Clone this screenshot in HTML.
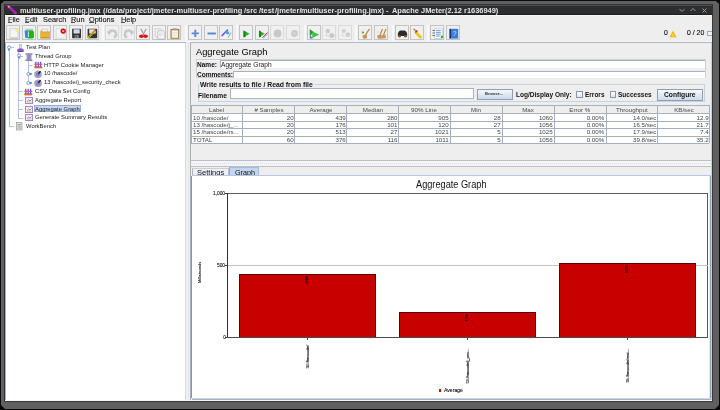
<!DOCTYPE html>
<html><head><meta charset="utf-8"><style>
html,body{margin:0;padding:0;width:720px;height:410px;overflow:hidden;background:#000}
body>div,body>svg{position:absolute;box-sizing:border-box}
.t{will-change:transform;font-family:"Liberation Sans", sans-serif;white-space:nowrap}
</style></head><body>
<div style="left:0;top:0;width:720px;height:410px;background:#0a0a0a"></div>
<div style="left:1px;top:1px;width:718px;height:408px;background:#606060;clip-path:polygon(3px 0,715px 0,718px 3px,718px 404px,714px 408px,4px 408px,0 404px,0 3px)"></div>
<div style="left:4px;top:4px;width:709px;height:398px;background:#2e2e2e"></div>
<div style="left:712px;top:15px;width:1px;height:387px;background:#3a3a3a"></div>
<div style="left:5px;top:5px;width:707px;height:1px;background:#4a5258"></div>
<div style="left:5px;top:4px;width:707px;height:1px;background:#363636"></div>
<div style="left:5px;top:14px;width:707px;height:1px;background:#1e1e1e"></div>
<div style="left:4px;top:401px;width:709px;height:1px;background:#3a3a3a"></div>
<div class="t" style="left:20px;top:6px;font-size:7.45px;line-height:9px;font-weight:bold;color:#e4e4e4">multiuser-profiling.jmx</div>
<div class="t" style="left:103.4px;top:6px;font-size:7.45px;line-height:9px;font-weight:bold;color:#e4e4e4">(/data/project/jmeter-multiuser-profiling</div>
<div class="t" style="left:244.2px;top:6px;font-size:7.45px;line-height:9px;font-weight:bold;color:#e4e4e4">/src</div>
<div class="t" style="left:258.8px;top:6px;font-size:7.45px;line-height:9px;font-weight:bold;color:#e4e4e4">/test</div>
<div class="t" style="left:274.8px;top:6px;font-size:7.45px;line-height:9px;font-weight:bold;color:#e4e4e4">/jmeter/</div>
<div class="t" style="left:301.2px;top:6px;font-size:7.45px;line-height:9px;font-weight:bold;color:#e4e4e4">multiuser-profiling.jmx) -</div>
<div class="t" style="left:391.5px;top:6px;font-size:7.45px;line-height:9px;font-weight:bold;color:#e4e4e4">Apache</div>
<div class="t" style="left:420.6px;top:6px;font-size:7.45px;line-height:9px;font-weight:bold;color:#e4e4e4">JMeter</div>
<div class="t" style="left:444.9px;top:6px;font-size:7.45px;line-height:9px;font-weight:bold;color:#e4e4e4">(2.12</div>
<div class="t" style="left:464.4px;top:6px;font-size:7.45px;line-height:9px;font-weight:bold;color:#e4e4e4">r1636949)</div>
<svg style="left:7px;top:5px" width="11" height="10" viewBox="0 0 11 10"><path d="M1.5 1.5 L8.5 8" stroke="#c020c0" stroke-width="2.6" stroke-linecap="round"/><path d="M3 3 L8 7.5" stroke="#6a20d0" stroke-width="1" /><circle cx="1.8" cy="1.8" r="1" fill="#d0b060"/></svg>
<svg style="left:677px;top:6px" width="34" height="8" viewBox="0 0 34 8"><path d="M2.5 3 L5 5.5 L7.5 3" stroke="#9a9a9a" fill="none" stroke-width="1"/><path d="M13.5 5 L16 2.5 L18.5 5" stroke="#9a9a9a" fill="none" stroke-width="1"/><path d="M25.5 2.5 L29.5 6.5 M29.5 2.5 L25.5 6.5" stroke="#9a9a9a" fill="none" stroke-width="1"/></svg>
<div style="left:5px;top:15px;width:707px;height:385.8px;background:#eeeeee"></div>
<div style="left:5px;top:399.6px;width:707px;height:1.2px;background:#f6f6f6"></div>
<div style="left:5px;top:15px;width:707px;height:1px;background:#f8f8f8"></div>
<div class="t" style="left:8.2px;top:16.4px;font-size:7.35px;line-height:7.35px;font-weight:normal;color:#111;-webkit-text-stroke:0.1px #000">File</div>
<div class="t" style="left:24.9px;top:16.4px;font-size:7.35px;line-height:7.35px;font-weight:normal;color:#111;-webkit-text-stroke:0.1px #000">Edit</div>
<div class="t" style="left:42.8px;top:16.4px;font-size:7.35px;line-height:7.35px;font-weight:normal;color:#111;-webkit-text-stroke:0.1px #000">Search</div>
<div class="t" style="left:71px;top:16.4px;font-size:7.35px;line-height:7.35px;font-weight:normal;color:#111;-webkit-text-stroke:0.1px #000">Run</div>
<div class="t" style="left:89.1px;top:16.4px;font-size:7.35px;line-height:7.35px;font-weight:normal;color:#111;-webkit-text-stroke:0.1px #000">Options</div>
<div class="t" style="left:120.6px;top:16.4px;font-size:7.35px;line-height:7.35px;font-weight:normal;color:#111;-webkit-text-stroke:0.1px #000">Help</div>
<div style="left:8.3px;top:22.3px;width:3.6px;height:0.6px;background:#555"></div>
<div style="left:25px;top:22.3px;width:3.8px;height:0.6px;background:#555"></div>
<div style="left:71.2px;top:22.3px;width:4.2px;height:0.6px;background:#555"></div>
<div style="left:89.3px;top:22.3px;width:4.6px;height:0.6px;background:#555"></div>
<div style="left:120.8px;top:22.3px;width:4.4px;height:0.6px;background:#555"></div>
<div style="left:5px;top:24px;width:707px;height:18px;background:#eeeeee"></div>
<div style="left:5px;top:41px;width:707px;height:1px;background:#f6f6f6"></div>
<div style="left:5.7px;top:25.3px;width:14px;height:14.6px;border:0.8px solid #c4c4c4;background:#f0f0f0"></div>
<svg style="left:5.7px;top:25.5px" width="15" height="15" viewBox="0 0 15 15"><rect x="3.9" y="2.8" width="8.1" height="9.3" fill="#f6f6f4" stroke="#c4c4c4" stroke-width="0.7"/><path d="M4 12.1 h8" stroke="#a8a8a8" stroke-width="0.7"/><circle cx="11.2" cy="4.3" r="1.7" fill="#f4e890"/></svg>
<div style="left:21.5px;top:25.3px;width:14px;height:14.6px;border:0.8px solid #c4c4c4;background:#f0f0f0"></div>
<svg style="left:21.5px;top:25.5px" width="15" height="15" viewBox="0 0 15 15"><path d="M3.5 2.8 h7.5 v2 h-7.5 z" fill="#b8c0c8"/><path d="M2.6 4.5 h3.3 v7.4 h-2.6 z" fill="#2a8ae0"/><path d="M5.7 4.5 h5.2 l1 1.5 v5.8 l-1.5 0.6 h-4.7 z" fill="#20b020"/><rect x="6" y="5.5" width="0.9" height="5.5" fill="#c8f0c8"/></svg>
<div style="left:37.3px;top:25.3px;width:14px;height:14.6px;border:0.8px solid #c4c4c4;background:#f0f0f0"></div>
<svg style="left:37.3px;top:25.5px" width="15" height="15" viewBox="0 0 15 15"><rect x="5" y="3" width="5.5" height="3.5" fill="#f0f0f0" stroke="#b8b8b8" stroke-width="0.5"/><path d="M3.5 4.5 h1.5 v1 h8 v6.5 h-9.5 z" fill="#d8a428"/><path d="M3.3 6.4 h9.6 v5.6 q0 0.5 -0.5 0.5 h-8.6 q-0.5 0 -0.5 -0.5 z" fill="#e4b43c"/><path d="M3.5 11.8 h9.2" stroke="#b88818" stroke-width="0.8"/></svg>
<div style="left:53.1px;top:25.3px;width:14px;height:14.6px;border:0.8px solid #c4c4c4;background:#f0f0f0"></div>
<svg style="left:53.1px;top:25.5px" width="15" height="15" viewBox="0 0 15 15"><path d="M3.2 2.6 h6 l2.6 2.6 v5 l-2 2 h-6.6 z" fill="#f6f6f6" stroke="#d0d0d0" stroke-width="0.6"/><circle cx="10.2" cy="5.1" r="2.7" fill="#cc1010"/><path d="M9.2 4.1 l2 2 M11.2 4.1 l-2 2" stroke="#f8e0c0" stroke-width="0.8"/></svg>
<div style="left:68.9px;top:25.3px;width:14px;height:14.6px;border:0.8px solid #c4c4c4;background:#f0f0f0"></div>
<svg style="left:68.9px;top:25.5px" width="15" height="15" viewBox="0 0 15 15"><rect x="3.1" y="2.8" width="8.9" height="9.4" rx="0.6" fill="#333"/><rect x="4.6" y="3.3" width="6" height="4.2" fill="#dde6f0"/><path d="M4.6 4.6 h6 M4.6 5.9 h6" stroke="#b0c4dc" stroke-width="0.5"/><rect x="5.6" y="9" width="4" height="3" fill="#8a8a8a"/><rect x="6.6" y="9.5" width="1" height="2" fill="#333"/></svg>
<div style="left:84.7px;top:25.3px;width:14px;height:14.6px;border:0.8px solid #c4c4c4;background:#f0f0f0"></div>
<svg style="left:84.7px;top:25.5px" width="15" height="15" viewBox="0 0 15 15"><rect x="2.6" y="2.8" width="9.6" height="9.4" rx="0.6" fill="#333"/><rect x="4.2" y="3.3" width="6.5" height="4.2" fill="#dde6f0"/><path d="M3 12 L10.3 4.2" stroke="#d8b018" stroke-width="2.2"/><path d="M4 11 l1 -1 M6 8.8 l1 -1 M8 6.6 l1 -1" stroke="#222" stroke-width="0.7"/><circle cx="10.5" cy="4" r="1" fill="#e02020"/></svg>
<div style="left:105.3px;top:25.3px;width:14px;height:14.6px;border:0.8px solid #dadada;background:#f0f0f0"></div>
<svg style="left:105.3px;top:25.5px" width="15" height="15" viewBox="0 0 15 15"><path d="M3.8 7.5 C4 4, 10 3, 11 7.5 C11.5 9.5, 10 11, 9 11.5" stroke="#c8c8c8" stroke-width="2.6" fill="none"/><path d="M1.6 5.2 L6.6 5.2 L4.2 9.6 z" fill="#c8c8c8"/></svg>
<div style="left:120.7px;top:25.3px;width:14px;height:14.6px;border:0.8px solid #dadada;background:#f0f0f0"></div>
<svg style="left:120.7px;top:25.5px" width="15" height="15" viewBox="0 0 15 15"><path d="M11.2 7.5 C11 4, 5 3, 4 7.5 C3.5 9.5, 5 11, 6 11.5" stroke="#c8c8c8" stroke-width="2.6" fill="none"/><path d="M13.4 5.2 L8.4 5.2 L10.8 9.6 z" fill="#c8c8c8"/></svg>
<div style="left:136.1px;top:25.3px;width:14px;height:14.6px;border:0.8px solid #c4c4c4;background:#f0f0f0"></div>
<svg style="left:136.1px;top:25.5px" width="15" height="15" viewBox="0 0 15 15"><path d="M4.8 2.8 L8.2 9 M10.2 2.8 L6.8 9" stroke="#909090" stroke-width="1.1"/><path d="M5.8 3 L8 7.5 M9.2 3 L7 7.5" stroke="#e0e0e0" stroke-width="0.4"/><ellipse cx="5.4" cy="10.3" rx="2.3" ry="1.8" fill="#d81414"/><ellipse cx="9.6" cy="10.3" rx="2.3" ry="1.8" fill="#d81414"/></svg>
<div style="left:151.6px;top:25.3px;width:14px;height:14.6px;border:0.8px solid #c4c4c4;background:#f0f0f0"></div>
<svg style="left:151.6px;top:25.5px" width="15" height="15" viewBox="0 0 15 15"><path d="M3.2 2.8 h5.5 l1 1 v7 h-6.5 z" fill="#f2f2f2" stroke="#bcbcbc" stroke-width="0.6"/><path d="M5.8 4.8 h5.7 l1.2 1.2 v6 l-1.2 1 h-5.7 z" fill="#f6f6f6" stroke="#a8a8a8" stroke-width="0.6"/><path d="M7 7 h4 M7 8.5 h4 M7 10 h3" stroke="#c8c8c8" stroke-width="0.5"/></svg>
<div style="left:167.1px;top:25.3px;width:14px;height:14.6px;border:0.8px solid #c4c4c4;background:#f0f0f0"></div>
<svg style="left:167.1px;top:25.5px" width="15" height="15" viewBox="0 0 15 15"><rect x="3.5" y="3" width="8.8" height="9.8" rx="0.5" fill="#a8721e"/><rect x="4.6" y="4.2" width="6.6" height="7.6" fill="#f4f4f4"/><rect x="6" y="2.2" width="3.8" height="2" rx="0.5" fill="#9a9a9a"/><path d="M5.5 6.5 h5 M5.5 8 h5 M5.5 9.5 h4" stroke="#d4d4d4" stroke-width="0.5"/></svg>
<div style="left:188.0px;top:25.3px;width:14px;height:14.6px;border:0.8px solid #c4c4c4;background:#f0f0f0"></div>
<svg style="left:188.0px;top:25.5px" width="15" height="15" viewBox="0 0 15 15"><path d="M7.3 3.8 v7.2 M3.7 7.4 h7.2" stroke="#5a8ad0" stroke-width="1.9"/></svg>
<div style="left:203.6px;top:25.3px;width:14px;height:14.6px;border:0.8px solid #c4c4c4;background:#f0f0f0"></div>
<svg style="left:203.6px;top:25.5px" width="15" height="15" viewBox="0 0 15 15"><path d="M4.2 7.5 h7" stroke="#5a8ad0" stroke-width="1.8" stroke-linecap="round"/></svg>
<div style="left:219.0px;top:25.3px;width:14px;height:14.6px;border:0.8px solid #c4c4c4;background:#f0f0f0"></div>
<svg style="left:219.0px;top:25.5px" width="15" height="15" viewBox="0 0 15 15"><path d="M3 9.6 L8.5 4" stroke="#8a4ae0" stroke-width="1.5" stroke-linecap="round"/><path d="M6.5 7 Q8 5 9.5 8" stroke="#28a8f0" stroke-width="2.4" fill="none"/><path d="M9 11.5 L12.2 6.5" stroke="#b0b0b0" stroke-width="1.2"/></svg>
<div style="left:239.3px;top:25.3px;width:14px;height:14.6px;border:0.8px solid #c4c4c4;background:#f0f0f0"></div>
<svg style="left:239.3px;top:25.5px" width="15" height="15" viewBox="0 0 15 15"><path d="M4.5 4.4 L10.8 7.8 L4.5 11.2 z" fill="#30b030"/><path d="M4.5 4.4 L6.5 5.5 L6.5 11 L4.5 11.2 z" fill="#148814"/></svg>
<div style="left:254.8px;top:25.3px;width:14px;height:14.6px;border:0.8px solid #c4c4c4;background:#f0f0f0"></div>
<svg style="left:254.8px;top:25.5px" width="15" height="15" viewBox="0 0 15 15"><path d="M4 4.4 L9.8 7.8 L4 11.2 z" fill="#30b030"/><path d="M4 4.4 L6 5.5 L6 11 L4 11.2 z" fill="#148814"/><path d="M7.5 11.8 L12.4 6.5" stroke="#e02828" stroke-width="1"/><path d="M8.5 12 L12.6 8" stroke="#4aa0e0" stroke-width="0.8"/></svg>
<div style="left:270.4px;top:25.3px;width:14px;height:14.6px;border:0.8px solid #dadada;background:#f0f0f0"></div>
<svg style="left:270.4px;top:25.5px" width="15" height="15" viewBox="0 0 15 15"><circle cx="7.6" cy="7.5" r="3.9" fill="#c8c8c8"/></svg>
<div style="left:286.0px;top:25.3px;width:14px;height:14.6px;border:0.8px solid #dadada;background:#f0f0f0"></div>
<svg style="left:286.0px;top:25.5px" width="15" height="15" viewBox="0 0 15 15"><circle cx="8.4" cy="7.5" r="3.4" fill="#cacaca"/><path d="M7.3 6.4 l2.2 2.2 M9.5 6.4 l-2.2 2.2" stroke="#e6e6e6" stroke-width="0.7"/></svg>
<div style="left:306.7px;top:25.3px;width:14px;height:14.6px;border:0.8px solid #c4c4c4;background:#f0f0f0"></div>
<svg style="left:306.7px;top:25.5px" width="15" height="15" viewBox="0 0 15 15"><path d="M2.7 3.1 L7.5 6.4 L2.7 9.7 z" fill="#2aa02a"/><path d="M5.3 5.8 L12.3 8.5 L5.3 12 z" fill="#40c040"/><path d="M3.5 9.6 v2.2 h2" stroke="#2a78c8" stroke-width="1.3" fill="none"/></svg>
<div style="left:322.2px;top:25.3px;width:14px;height:14.6px;border:0.8px solid #dadada;background:#f0f0f0"></div>
<svg style="left:322.2px;top:25.5px" width="15" height="15" viewBox="0 0 15 15"><circle cx="5.8" cy="5" r="2.3" fill="#cccccc"/><circle cx="9.8" cy="9.5" r="2.5" fill="#c8c8c8"/><path d="M4.5 7.5 v2.5 h2.5" stroke="#c8c8c8" stroke-width="0.7" fill="none"/></svg>
<div style="left:337.7px;top:25.3px;width:14px;height:14.6px;border:0.8px solid #dadada;background:#f0f0f0"></div>
<svg style="left:337.7px;top:25.5px" width="15" height="15" viewBox="0 0 15 15"><circle cx="5.8" cy="5" r="2.1" fill="#d0d0d0"/><circle cx="9.8" cy="8.8" r="2.3" fill="#cccccc"/><path d="M4.5 7.5 v2.5 h2.5" stroke="#d0d0d0" stroke-width="0.7" fill="none"/></svg>
<div style="left:358.3px;top:25.3px;width:14px;height:14.6px;border:0.8px solid #c4c4c4;background:#f0f0f0"></div>
<svg style="left:358.3px;top:25.5px" width="15" height="15" viewBox="0 0 15 15"><circle cx="4.5" cy="6" r="2" fill="#e4e4e4"/><circle cx="5" cy="6.5" r="1" fill="#40b030"/><path d="M7.5 9 L11.3 3" stroke="#b88848" stroke-width="1.4"/><path d="M4.2 9.5 L8.8 8.2 L9.2 12.3 L5.4 12.8 z" fill="#c89458"/></svg>
<div style="left:373.6px;top:25.3px;width:14px;height:14.6px;border:0.8px solid #c4c4c4;background:#f0f0f0"></div>
<svg style="left:373.6px;top:25.5px" width="15" height="15" viewBox="0 0 15 15"><circle cx="4" cy="6" r="1.6" fill="#e6e6e6"/><path d="M6 9 L8.5 3 M9.5 9 L12 3" stroke="#b88848" stroke-width="1.2"/><path d="M3 9.5 L7.5 8.5 L8 12.5 L4 12.8 z" fill="#c89458"/><path d="M7 9.5 L11.5 8.5 L12 12.3 L8 12.6 z" fill="#c89458"/></svg>
<div style="left:394.9px;top:25.3px;width:14px;height:14.6px;border:0.8px solid #c4c4c4;background:#f0f0f0"></div>
<svg style="left:394.9px;top:25.5px" width="15" height="15" viewBox="0 0 15 15"><path d="M2.7 9 Q3 5 5.5 4.5 L9.5 4.5 Q12 5 12.3 9 Q12 11.5 10 11.5 L9 10 L6 10 L5 11.5 Q3 11.5 2.7 9 z" fill="#2a2a2a"/><ellipse cx="4.5" cy="10" rx="1.4" ry="1" fill="#a05020"/><ellipse cx="10.5" cy="10" rx="1.4" ry="1" fill="#a05020"/></svg>
<div style="left:409.8px;top:25.3px;width:14px;height:14.6px;border:0.8px solid #c4c4c4;background:#f0f0f0"></div>
<svg style="left:409.8px;top:25.5px" width="15" height="15" viewBox="0 0 15 15"><path d="M3.5 2.8 L7.5 6.8" stroke="#c88838" stroke-width="1.5"/><path d="M6.5 5.5 L12.5 10.8 L10 12.8 L4.8 7.2 z" fill="#f0c81c"/><path d="M5.3 6.5 L7.4 4.6" stroke="#d82020" stroke-width="1.3"/><path d="M7 9 L10.5 12" stroke="#d8a810" stroke-width="0.5"/></svg>
<div style="left:430.0px;top:25.3px;width:14px;height:14.6px;border:0.8px solid #c4c4c4;background:#f0f0f0"></div>
<svg style="left:430.0px;top:25.5px" width="15" height="15" viewBox="0 0 15 15"><rect x="4.3" y="2.8" width="8" height="9.8" fill="#f8fafc" stroke="#b8c4d0" stroke-width="0.6"/><path d="M5.8 4.6 h5 M5.8 6.4 h5 M5.8 8.2 h5 M5.8 10 h4" stroke="#4a8ad8" stroke-width="0.8"/><path d="M2.5 4.5 h2.2 M2.5 7 h2.2 M2.5 9.5 h2.2" stroke="#404040" stroke-width="0.8"/><rect x="10.8" y="9.6" width="2.2" height="2.4" fill="#30b030"/></svg>
<div style="left:445.6px;top:25.3px;width:14px;height:14.6px;border:0.8px solid #c4c4c4;background:#f0f0f0"></div>
<svg style="left:445.6px;top:25.5px" width="15" height="15" viewBox="0 0 15 15"><rect x="4.6" y="2.8" width="7.6" height="9.8" fill="#3a7ad8"/><rect x="3.4" y="2.8" width="1.6" height="9.8" fill="#1a3060"/><text x="8.4" y="10.2" font-size="7" font-family="Liberation Sans" fill="#d8e8ff" text-anchor="middle">?</text></svg>
<div style="left:101.5px;top:25px;width:2px;height:16px;background:#f8f8f8"></div>
<div style="left:184.5px;top:25px;width:2px;height:16px;background:#f8f8f8"></div>
<div style="left:236px;top:25px;width:2px;height:16px;background:#f8f8f8"></div>
<div style="left:303.5px;top:25px;width:2px;height:16px;background:#f8f8f8"></div>
<div style="left:355px;top:25px;width:2px;height:16px;background:#f8f8f8"></div>
<div style="left:391.5px;top:25px;width:2px;height:16px;background:#f8f8f8"></div>
<div style="left:427px;top:25px;width:2px;height:16px;background:#f8f8f8"></div>
<div class="t" style="left:663.5px;top:30.3px;font-size:6.9px;line-height:6.9px;font-weight:normal;color:#111;-webkit-text-stroke:0.12px #000">0</div>
<svg style="left:668.5px;top:29.5px" width="8" height="8" viewBox="0 0 8 8"><path d="M4 0.5 L7.5 7.3 L0.5 7.3 z" fill="#f2b418"/><path d="M4 3 L5.6 6.2 L2.4 6.2 z" fill="#f8d838"/></svg>
<div class="t" style="left:686.5px;top:30.3px;font-size:6.9px;line-height:6.9px;font-weight:normal;color:#111;-webkit-text-stroke:0.12px #000">0 / 20</div>
<div style="left:707.3px;top:31px;width:5px;height:5px;background:#eef2f8;border:0.6px solid #9aa8b8;border-right:none"></div>
<div style="left:5px;top:43px;width:180.3px;height:356.6px;background:#ffffff"></div>
<div style="left:185.2px;top:43px;width:1px;height:356.6px;background:#d4dae2"></div>
<div style="left:186.2px;top:43px;width:4.2px;height:356.6px;background:#f0f0f0"></div>
<div style="left:188px;top:43px;width:1px;height:356px;background:repeating-linear-gradient(#dadada 0 1px,transparent 1px 2px)"></div>
<div style="left:9.2px;top:50.5px;width:0.8px;height:76.5px;background:#abc3e4"></div>
<div style="left:9.2px;top:126.2px;width:4.5px;height:0.8px;background:#abc3e4"></div>
<div style="left:11px;top:46.8px;width:3px;height:0.8px;background:#abc3e4"></div>
<div style="left:18.4px;top:52px;width:0.8px;height:2.2px;background:#abc3e4"></div>
<div style="left:18.4px;top:59.3px;width:0.8px;height:58.7px;background:#abc3e4"></div>
<div style="left:18.4px;top:91.2px;width:4.5px;height:0.8px;background:#abc3e4"></div>
<div style="left:18.4px;top:100.0px;width:4.5px;height:0.8px;background:#abc3e4"></div>
<div style="left:18.4px;top:108.8px;width:4.5px;height:0.8px;background:#abc3e4"></div>
<div style="left:18.4px;top:117.6px;width:4.5px;height:0.8px;background:#abc3e4"></div>
<div style="left:20.2px;top:55.6px;width:3px;height:0.8px;background:#abc3e4"></div>
<div style="left:27.6px;top:61px;width:0.8px;height:22px;background:#abc3e4"></div>
<div style="left:27.6px;top:64.6px;width:4.5px;height:0.8px;background:#abc3e4"></div>
<div style="left:27.6px;top:73.4px;width:4.5px;height:0.8px;background:#abc3e4"></div>
<div style="left:27.6px;top:82.2px;width:4.5px;height:0.8px;background:#abc3e4"></div>
<svg style="left:6.4px;top:44.5px" width="6" height="7" viewBox="0 0 6 7"><circle cx="3" cy="2.4" r="1.5" fill="#fff" stroke="#5a88d0" stroke-width="0.8"/><path d="M1.6 3.9 L4.4 3.9 L3 6.6 z" fill="#5a88d0"/></svg>
<svg style="left:15.600000000000001px;top:53.3px" width="6" height="7" viewBox="0 0 6 7"><circle cx="3" cy="2.4" r="1.5" fill="#fff" stroke="#5a88d0" stroke-width="0.8"/><path d="M1.6 3.9 L4.4 3.9 L3 6.6 z" fill="#5a88d0"/></svg>
<svg style="left:25.5px;top:70.8px" width="7" height="6" viewBox="0 0 7 6"><circle cx="2.3" cy="3" r="1.5" fill="#fff" stroke="#5a88d0" stroke-width="0.8"/><path d="M3.9 1.6 L3.9 4.4 L6.6 3 z" fill="#5a88d0"/></svg>
<svg style="left:25.5px;top:79.6px" width="7" height="6" viewBox="0 0 7 6"><circle cx="2.3" cy="3" r="1.5" fill="#fff" stroke="#5a88d0" stroke-width="0.8"/><path d="M3.9 1.6 L3.9 4.4 L6.6 3 z" fill="#5a88d0"/></svg>
<svg style="left:16.5px;top:43.8px" width="7" height="8.5" viewBox="0 0 7 8.5"><rect x="2.3" y="0" width="2.4" height="4.6" fill="#d8d8e0" stroke="#999" stroke-width="0.4"/><ellipse cx="3.5" cy="6.2" rx="3.3" ry="1.9" fill="#8a5ad0"/><rect x="0.5" y="7.3" width="6" height="0.9" fill="#5a3a90"/></svg>
<svg style="left:25px;top:52.5px" width="8" height="8.5" viewBox="0 0 8 8.5"><rect x="0.5" y="0.3" width="7" height="1.6" fill="#8a80a8"/><rect x="1.5" y="1.5" width="5" height="5.5" fill="#a89cc8"/><rect x="0.5" y="6.6" width="7" height="1.6" fill="#8a80a8"/><path d="M2.5 3 h3 M2.5 5 h3" stroke="#6a6088" stroke-width="0.5"/></svg>
<svg style="left:34px;top:61px" width="8.5" height="8.5" viewBox="0 0 8.5 8.5"><rect x="0.3" y="5" width="8" height="2.6" rx="1" fill="#e89030"/><path d="M1.8 0.8 v6 M4.2 0.8 v6 M6.6 0.8 v6" stroke="#5a58d8" stroke-width="1.3"/><path d="M0.3 3.3 h8" stroke="#e04a9a" stroke-width="1.3"/><path d="M0 6.2 h8.5" stroke="#d87a20" stroke-width="0.7"/></svg>
<svg style="left:34px;top:69.8px" width="8.2" height="8.6" viewBox="0 0 8.2 8.6"><circle cx="4" cy="4.4" r="3.6" fill="#aaa2d4" stroke="#6a6298" stroke-width="0.5" stroke-dasharray="0.8 0.6"/><circle cx="4" cy="4.4" r="2" fill="#8a80b8"/><path d="M4.3 3.8 L6.6 1.3" stroke="#181828" stroke-width="1.4"/></svg>
<svg style="left:34px;top:78.6px" width="8.2" height="8.6" viewBox="0 0 8.2 8.6"><circle cx="4" cy="4.4" r="3.6" fill="#aaa2d4" stroke="#6a6298" stroke-width="0.5" stroke-dasharray="0.8 0.6"/><circle cx="4" cy="4.4" r="2" fill="#8a80b8"/><path d="M4.3 3.8 L6.6 1.3" stroke="#181828" stroke-width="1.4"/></svg>
<svg style="left:24.2px;top:87.5px" width="8.5" height="8.5" viewBox="0 0 8.5 8.5"><rect x="0.3" y="5" width="8" height="2.6" rx="1" fill="#e89030"/><path d="M1.8 0.8 v6 M4.2 0.8 v6 M6.6 0.8 v6" stroke="#5a58d8" stroke-width="1.3"/><path d="M0.3 3.3 h8" stroke="#e04a9a" stroke-width="1.3"/><path d="M0 6.2 h8.5" stroke="#d87a20" stroke-width="0.7"/></svg>
<svg style="left:24.8px;top:96.8px" width="8.2" height="7.5" viewBox="0 0 8.2 7.5"><rect x="0.6" y="0.6" width="7" height="6" fill="#fafafa" stroke="#9a7ccc" stroke-width="1.0"/><path d="M2 4.5 L3.5 3 L5 4 L6.5 2.5" stroke="#e03030" stroke-width="0.7" fill="none"/><path d="M2 5 L6.5 5" stroke="#30a030" stroke-width="0.5"/></svg>
<svg style="left:24.8px;top:105.6px" width="8.2" height="7.5" viewBox="0 0 8.2 7.5"><rect x="0.6" y="0.6" width="7" height="6" fill="#fafafa" stroke="#9a7ccc" stroke-width="1.0"/><path d="M2 4.5 L3.5 3 L5 4 L6.5 2.5" stroke="#e03030" stroke-width="0.7" fill="none"/><path d="M2 5 L6.5 5" stroke="#30a030" stroke-width="0.5"/></svg>
<svg style="left:24.8px;top:114.4px" width="8.2" height="7.5" viewBox="0 0 8.2 7.5"><rect x="0.6" y="0.6" width="7" height="6" fill="#fafafa" stroke="#9a7ccc" stroke-width="1.0"/><path d="M2 4.5 L3.5 3 L5 4 L6.5 2.5" stroke="#e03030" stroke-width="0.7" fill="none"/><path d="M2 5 L6.5 5" stroke="#30a030" stroke-width="0.5"/></svg>
<svg style="left:16px;top:122.3px" width="6.5" height="8.5" viewBox="0 0 6.5 8.5"><rect x="0.5" y="0.5" width="5.5" height="7.5" fill="#e4e4e4" stroke="#8a8a8a" stroke-width="0.6"/><path d="M1.5 2.5 h3.5 M1.5 4.2 h3.5 M1.5 6 h3.5" stroke="#7a7a7a" stroke-width="0.6"/></svg>
<div style="left:34.2px;top:104.7px;width:46.5px;height:7.8px;background:#c6d8f0;border:0.6px solid #94acd6;box-sizing:border-box"></div>
<div class="t" style="left:26.2px;top:45.0px;font-size:5.85px;line-height:5.85px;font-weight:normal;color:#222;">Test Plan</div>
<div class="t" style="left:35.2px;top:53.800000000000004px;font-size:5.85px;line-height:5.85px;font-weight:normal;color:#222;">Thread Group</div>
<div class="t" style="left:44px;top:62.60000000000001px;font-size:5.85px;line-height:5.85px;font-weight:normal;color:#222;">HTTP Cookie Manager</div>
<div class="t" style="left:44px;top:71.4px;font-size:5.85px;line-height:5.85px;font-weight:normal;color:#222;">10 /hascode/</div>
<div class="t" style="left:44px;top:80.2px;font-size:5.85px;line-height:5.85px;font-weight:normal;color:#222;">13 /hascode/j_security_check</div>
<div class="t" style="left:35.2px;top:89.0px;font-size:5.85px;line-height:5.85px;font-weight:normal;color:#222;">CSV Data Set Config</div>
<div class="t" style="left:35.2px;top:97.8px;font-size:5.85px;line-height:5.85px;font-weight:normal;color:#222;">Aggregate Report</div>
<div class="t" style="left:35.2px;top:106.60000000000001px;font-size:5.85px;line-height:5.85px;font-weight:normal;color:#222;">Aggregate Graph</div>
<div class="t" style="left:35.2px;top:115.4px;font-size:5.85px;line-height:5.85px;font-weight:normal;color:#222;">Generate Summary Results</div>
<div class="t" style="left:26.2px;top:124.2px;font-size:5.85px;line-height:5.85px;font-weight:normal;color:#222;">WorkBench</div>
<div style="left:190.4px;top:43px;width:521.6px;height:356.6px;background:#eeeeee"></div>
<div style="left:190.2px;top:43px;width:1px;height:356.6px;background:#a8b0ba"></div>
<div style="left:5px;top:42.1px;width:181px;height:0.9px;background:#aeb8c4"></div>
<div style="left:5px;top:43px;width:1px;height:356.6px;background:#a4b0be"></div>
<div style="left:190.2px;top:42.1px;width:521.8px;height:0.9px;background:#aeb8c4"></div>
<div class="t" style="left:196.3px;top:48.0px;font-size:9.3px;line-height:9.3px;font-weight:normal;color:#000;">Aggregate Graph</div>
<div style="left:195.6px;top:59.3px;width:510px;height:19px;border:0.7px solid #cfcfcf;box-sizing:border-box;box-shadow:inset 0.6px 0.6px 0 #fff"></div>
<div class="t" style="left:197px;top:62.1px;font-size:6.55px;line-height:6.55px;font-weight:bold;color:#111;">Name:</div>
<div style="left:219.9px;top:60.3px;width:485.3px;height:7.5px;background:#fff;border-top:0.7px solid #a8b0c0;border-left:0.7px solid #a8b0c0;box-sizing:border-box"></div>
<div class="t" style="left:220.9px;top:62.0px;font-size:6.6px;line-height:6.6px;font-weight:normal;color:#1a1a1a;">Aggregate Graph</div>
<div class="t" style="left:197px;top:72.2px;font-size:6.55px;line-height:6.55px;font-weight:bold;color:#111;">Comments:</div>
<div style="left:233.1px;top:70.8px;width:472.1px;height:7.1px;background:#fff;border-top:0.7px solid #a8b0c0;border-left:0.7px solid #a8b0c0;box-sizing:border-box"></div>
<div style="left:197.5px;top:84.3px;width:507px;height:17.4px;border:0.7px solid #c4d2e4;box-sizing:border-box"></div>
<div style="left:199.4px;top:81.5px;width:116px;height:5px;background:#eeeeee"></div>
<div class="t" style="left:200.2px;top:82.4px;font-size:6.85px;line-height:6.85px;font-weight:bold;color:#111;">Write results to file / Read from file</div>
<div class="t" style="left:198.3px;top:92.5px;font-size:6.7px;line-height:6.7px;font-weight:bold;color:#111;">Filename</div>
<div style="left:230px;top:88.3px;width:243.8px;height:11.1px;background:#fff;border:0.7px solid #a8b4c4;box-sizing:border-box"></div>
<div style="left:477.3px;top:88.9px;width:35.9px;height:10.7px;background:linear-gradient(#f4f7fb,#cbd9e8);border:0.7px solid #8ea0b8;box-sizing:border-box"></div>
<div class="t" style="left:484.5px;top:92.4px;font-size:4.1px;line-height:4.1px;font-weight:bold;color:#333;">Browse...</div>
<div class="t" style="left:515.8px;top:92.3px;font-size:6.56px;line-height:6.56px;font-weight:bold;color:#111;">Log/Display Only:</div>
<div style="left:576.3px;top:91.4px;width:6.6px;height:6.6px;background:linear-gradient(#ffffff,#dde6f0);border:0.7px solid #8898b0;box-sizing:border-box"></div>
<div class="t" style="left:584.6px;top:92.3px;font-size:6.5px;line-height:6.5px;font-weight:bold;color:#111;">Errors</div>
<div style="left:610px;top:91.4px;width:6.4px;height:6.6px;background:linear-gradient(#ffffff,#dde6f0);border:0.7px solid #8898b0;box-sizing:border-box"></div>
<div class="t" style="left:618.3px;top:92.3px;font-size:6.5px;line-height:6.5px;font-weight:bold;color:#111;">Successes</div>
<div style="left:656.5px;top:88.9px;width:46.8px;height:11.9px;background:linear-gradient(#f6f9fc,#cddbea);border:0.7px solid #8ea0b8;box-sizing:border-box"></div>
<div class="t" style="left:664.2px;top:91.9px;font-size:6.7px;line-height:6.7px;font-weight:bold;color:#111;">Configure</div>
<div style="left:191.3px;top:105.2px;width:518.2px;height:8.1px;background:#eeeeee"></div>
<div style="left:191.3px;top:113.3px;width:518.2px;height:30px;background:#fff"></div>
<div style="left:190.9px;top:105.2px;width:0.8px;height:38.1px;background:#a2b0c2"></div>
<div style="left:242.1px;top:105.2px;width:0.8px;height:38.1px;background:#a2b0c2"></div>
<div style="left:294.1px;top:105.2px;width:0.8px;height:38.1px;background:#a2b0c2"></div>
<div style="left:346.20000000000005px;top:105.2px;width:0.8px;height:38.1px;background:#a2b0c2"></div>
<div style="left:398.0px;top:105.2px;width:0.8px;height:38.1px;background:#a2b0c2"></div>
<div style="left:450.0px;top:105.2px;width:0.8px;height:38.1px;background:#a2b0c2"></div>
<div style="left:502.0px;top:105.2px;width:0.8px;height:38.1px;background:#a2b0c2"></div>
<div style="left:554.0px;top:105.2px;width:0.8px;height:38.1px;background:#a2b0c2"></div>
<div style="left:605.5px;top:105.2px;width:0.8px;height:38.1px;background:#a2b0c2"></div>
<div style="left:657.2px;top:105.2px;width:0.8px;height:38.1px;background:#a2b0c2"></div>
<div style="left:709.1px;top:105.2px;width:0.8px;height:38.1px;background:#a2b0c2"></div>
<div style="left:191.3px;top:104.9px;width:518.2px;height:0.8px;background:#a2b0c2"></div>
<div style="left:191.3px;top:112.8px;width:518.2px;height:0.8px;background:#a2b0c2"></div>
<div style="left:191.3px;top:121.0px;width:518.2px;height:0.8px;background:#a2b0c2"></div>
<div style="left:191.3px;top:128.29999999999998px;width:518.2px;height:0.8px;background:#a2b0c2"></div>
<div style="left:191.3px;top:135.79999999999998px;width:518.2px;height:0.8px;background:#a2b0c2"></div>
<div style="left:191.3px;top:142.9px;width:518.2px;height:0.8px;background:#a2b0c2"></div>
<div class="t" style="left:191.3px;top:106.6px;width:51.19999999999999px;text-align:center;font-size:6.2px;line-height:6.4px;color:#4a4a4a">Label</div>
<div class="t" style="left:242.5px;top:106.6px;width:52.0px;text-align:center;font-size:6.2px;line-height:6.4px;color:#4a4a4a"># Samples</div>
<div class="t" style="left:294.5px;top:106.6px;width:52.10000000000002px;text-align:center;font-size:6.2px;line-height:6.4px;color:#4a4a4a">Average</div>
<div class="t" style="left:346.6px;top:106.6px;width:51.799999999999955px;text-align:center;font-size:6.2px;line-height:6.4px;color:#4a4a4a">Median</div>
<div class="t" style="left:398.4px;top:106.6px;width:52.0px;text-align:center;font-size:6.2px;line-height:6.4px;color:#4a4a4a">90% Line</div>
<div class="t" style="left:450.4px;top:106.6px;width:52.0px;text-align:center;font-size:6.2px;line-height:6.4px;color:#4a4a4a">Min</div>
<div class="t" style="left:502.4px;top:106.6px;width:52.0px;text-align:center;font-size:6.2px;line-height:6.4px;color:#4a4a4a">Max</div>
<div class="t" style="left:554.4px;top:106.6px;width:51.5px;text-align:center;font-size:6.2px;line-height:6.4px;color:#4a4a4a">Error %</div>
<div class="t" style="left:605.9px;top:106.6px;width:51.700000000000045px;text-align:center;font-size:6.2px;line-height:6.4px;color:#4a4a4a">Throughput</div>
<div class="t" style="left:657.6px;top:106.6px;width:51.89999999999998px;text-align:center;font-size:6.2px;line-height:6.4px;color:#4a4a4a">KB/sec</div>
<div class="t" style="left:192.5px;top:114.6px;font-size:6.2px;line-height:6.2px;color:#444">10 /hascode/</div>
<div class="t" style="left:242.5px;top:114.6px;width:50.7px;text-align:right;font-size:6.2px;line-height:6.2px;color:#444">20</div>
<div class="t" style="left:294.5px;top:114.6px;width:50.800000000000026px;text-align:right;font-size:6.2px;line-height:6.2px;color:#444">439</div>
<div class="t" style="left:346.6px;top:114.6px;width:50.49999999999996px;text-align:right;font-size:6.2px;line-height:6.2px;color:#444">280</div>
<div class="t" style="left:398.4px;top:114.6px;width:50.7px;text-align:right;font-size:6.2px;line-height:6.2px;color:#444">905</div>
<div class="t" style="left:450.4px;top:114.6px;width:50.7px;text-align:right;font-size:6.2px;line-height:6.2px;color:#444">28</div>
<div class="t" style="left:502.4px;top:114.6px;width:50.7px;text-align:right;font-size:6.2px;line-height:6.2px;color:#444">1060</div>
<div class="t" style="left:554.4px;top:114.6px;width:50.2px;text-align:right;font-size:6.2px;line-height:6.2px;color:#444">0.00%</div>
<div class="t" style="left:605.9px;top:114.6px;width:50.40000000000005px;text-align:right;font-size:6.2px;line-height:6.2px;color:#444">14.0/sec</div>
<div class="t" style="left:657.6px;top:114.6px;width:50.59999999999998px;text-align:right;font-size:6.2px;line-height:6.2px;color:#444">12.9</div>
<div class="t" style="left:192.5px;top:122.0px;font-size:6.2px;line-height:6.2px;color:#444">13 /hascode/j_...</div>
<div class="t" style="left:242.5px;top:122.0px;width:50.7px;text-align:right;font-size:6.2px;line-height:6.2px;color:#444">20</div>
<div class="t" style="left:294.5px;top:122.0px;width:50.800000000000026px;text-align:right;font-size:6.2px;line-height:6.2px;color:#444">176</div>
<div class="t" style="left:346.6px;top:122.0px;width:50.49999999999996px;text-align:right;font-size:6.2px;line-height:6.2px;color:#444">101</div>
<div class="t" style="left:398.4px;top:122.0px;width:50.7px;text-align:right;font-size:6.2px;line-height:6.2px;color:#444">120</div>
<div class="t" style="left:450.4px;top:122.0px;width:50.7px;text-align:right;font-size:6.2px;line-height:6.2px;color:#444">27</div>
<div class="t" style="left:502.4px;top:122.0px;width:50.7px;text-align:right;font-size:6.2px;line-height:6.2px;color:#444">1056</div>
<div class="t" style="left:554.4px;top:122.0px;width:50.2px;text-align:right;font-size:6.2px;line-height:6.2px;color:#444">0.00%</div>
<div class="t" style="left:605.9px;top:122.0px;width:50.40000000000005px;text-align:right;font-size:6.2px;line-height:6.2px;color:#444">16.5/sec</div>
<div class="t" style="left:657.6px;top:122.0px;width:50.59999999999998px;text-align:right;font-size:6.2px;line-height:6.2px;color:#444">21.7</div>
<div class="t" style="left:192.5px;top:129.4px;font-size:6.2px;line-height:6.2px;color:#444">15 /hascode/rs...</div>
<div class="t" style="left:242.5px;top:129.4px;width:50.7px;text-align:right;font-size:6.2px;line-height:6.2px;color:#444">20</div>
<div class="t" style="left:294.5px;top:129.4px;width:50.800000000000026px;text-align:right;font-size:6.2px;line-height:6.2px;color:#444">513</div>
<div class="t" style="left:346.6px;top:129.4px;width:50.49999999999996px;text-align:right;font-size:6.2px;line-height:6.2px;color:#444">27</div>
<div class="t" style="left:398.4px;top:129.4px;width:50.7px;text-align:right;font-size:6.2px;line-height:6.2px;color:#444">1021</div>
<div class="t" style="left:450.4px;top:129.4px;width:50.7px;text-align:right;font-size:6.2px;line-height:6.2px;color:#444">5</div>
<div class="t" style="left:502.4px;top:129.4px;width:50.7px;text-align:right;font-size:6.2px;line-height:6.2px;color:#444">1025</div>
<div class="t" style="left:554.4px;top:129.4px;width:50.2px;text-align:right;font-size:6.2px;line-height:6.2px;color:#444">0.00%</div>
<div class="t" style="left:605.9px;top:129.4px;width:50.40000000000005px;text-align:right;font-size:6.2px;line-height:6.2px;color:#444">17.9/sec</div>
<div class="t" style="left:657.6px;top:129.4px;width:50.59999999999998px;text-align:right;font-size:6.2px;line-height:6.2px;color:#444">7.4</div>
<div class="t" style="left:192.5px;top:136.8px;font-size:6.2px;line-height:6.2px;color:#444">TOTAL</div>
<div class="t" style="left:242.5px;top:136.8px;width:50.7px;text-align:right;font-size:6.2px;line-height:6.2px;color:#444">60</div>
<div class="t" style="left:294.5px;top:136.8px;width:50.800000000000026px;text-align:right;font-size:6.2px;line-height:6.2px;color:#444">376</div>
<div class="t" style="left:346.6px;top:136.8px;width:50.49999999999996px;text-align:right;font-size:6.2px;line-height:6.2px;color:#444">116</div>
<div class="t" style="left:398.4px;top:136.8px;width:50.7px;text-align:right;font-size:6.2px;line-height:6.2px;color:#444">1011</div>
<div class="t" style="left:450.4px;top:136.8px;width:50.7px;text-align:right;font-size:6.2px;line-height:6.2px;color:#444">5</div>
<div class="t" style="left:502.4px;top:136.8px;width:50.7px;text-align:right;font-size:6.2px;line-height:6.2px;color:#444">1056</div>
<div class="t" style="left:554.4px;top:136.8px;width:50.2px;text-align:right;font-size:6.2px;line-height:6.2px;color:#444">0.00%</div>
<div class="t" style="left:605.9px;top:136.8px;width:50.40000000000005px;text-align:right;font-size:6.2px;line-height:6.2px;color:#444">39.8/sec</div>
<div class="t" style="left:657.6px;top:136.8px;width:50.59999999999998px;text-align:right;font-size:6.2px;line-height:6.2px;color:#444">35.2</div>
<div style="left:191.2px;top:160.1px;width:520.8px;height:0.9px;background:#b8c0cc"></div>
<div style="left:191.2px;top:161.0px;width:520.8px;height:5.2px;background:#f4f4f4"></div>
<div style="left:192px;top:163.2px;width:519px;height:0.9px;background:repeating-linear-gradient(90deg,#dcdcdc 0 1px,transparent 1px 2px)"></div>
<div style="left:191.2px;top:166.0px;width:520.8px;height:0.9px;background:#b8c0cc"></div>
<div style="left:192.2px;top:167.8px;width:37.2px;height:7.6px;background:#f0f0f0;border-left:0.7px solid #a8b4c8;border-top:0.7px solid #c8d0dc;border-right:0.7px solid #b8c0cc;box-sizing:border-box"></div>
<div class="t" style="left:196.9px;top:169.0px;font-size:7.55px;line-height:7.55px;font-weight:normal;color:#111;">Settings</div>
<div style="left:229.4px;top:167.0px;width:29.5px;height:8.4px;background:#c4d7ee;border-left:0.8px solid #8ca6cc;border-top:0.7px solid #a8bcd8;border-right:0.7px solid #a8bcd8;box-sizing:border-box"></div>
<div class="t" style="left:235px;top:168.6px;font-size:7.2px;line-height:7.2px;font-weight:normal;color:#111;">Graph</div>
<div style="left:191.5px;top:175.3px;width:520.5px;height:1.1px;background:#b3c8e6"></div>
<div style="left:191.5px;top:176.4px;width:520.5px;height:223.2px;background:#ffffff"></div>
<div style="left:191.2px;top:176.4px;width:1px;height:221.2px;background:#7894c8"></div>
<div style="left:709.2px;top:176.4px;width:1px;height:221.2px;background:#e4ecf4"></div>
<div style="left:710.2px;top:176.4px;width:1px;height:221.2px;background:#90a0b8"></div>
<div style="left:711.2px;top:43px;width:0.8px;height:357px;background:#c8d0d8"></div>
<div style="left:191.5px;top:397.6px;width:519.6px;height:0.9px;background:#c4d4ea"></div>
<div style="left:191.5px;top:398.5px;width:519.6px;height:1.0px;background:#a8b4c4"></div>
<div class="t" style="left:416px;top:180.0px;font-size:9.2px;line-height:9.2px;font-weight:normal;color:#111;transform:scaleY(1.1);transform-origin:0 0">Aggregate Graph</div>
<div style="left:226.9px;top:193.0px;width:480.80000000000007px;height:144.3px;border:0.8px solid #5a5a5a;border-bottom:none;box-sizing:border-box;background:#fff"></div>
<div style="left:226.9px;top:193.0px;width:0.9px;height:144.3px;background:#303030"></div>
<div style="left:226.9px;top:265.0px;width:480.80000000000007px;height:0.6px;background:#c0c0c0"></div>
<div class="t" style="left:200px;top:190.5px;width:25px;text-align:right;font-size:4.8px;line-height:5px;color:#111;-webkit-text-stroke:0.1px #000">1,000</div>
<div class="t" style="left:200px;top:262.5px;width:25px;text-align:right;font-size:4.8px;line-height:5px;color:#111;-webkit-text-stroke:0.1px #000">500</div>
<div class="t" style="left:200.5px;top:334.6px;width:25px;text-align:right;font-size:4.8px;line-height:5px;color:#111;-webkit-text-stroke:0.1px #000">0</div>
<div style="left:225px;top:192.7px;width:2.5px;height:0.6px;background:#404040"></div>
<div style="left:225px;top:264.9px;width:2.5px;height:0.6px;background:#404040"></div>
<div style="left:225px;top:337.09999999999997px;width:2.5px;height:0.6px;background:#404040"></div>
<div class="t" style="left:190.3px;top:270.5px;width:20px;text-align:center;font-size:3.9px;line-height:4px;color:#000;-webkit-text-stroke:0.08px #000;transform:rotate(-90deg);transform-origin:10px 2px">Milliseconds</div>
<div style="left:239.0px;top:273.99620000000004px;width:136.6px;height:63.30379999999997px;background:#c80000;border:0.6px solid #5a0000;border-bottom:none;box-sizing:border-box"></div>
<div class="t" style="left:297.0px;top:277.99620000000004px;width:20px;text-align:center;font-size:4.4px;line-height:4px;color:#000;-webkit-text-stroke:0.12px #000;transform:rotate(-90deg)">439</div>
<div style="left:306.7px;top:337px;width:0.6px;height:3px;background:#404040"></div>
<div class="t" style="left:305.6px;top:345.3px;font-size:4.1px;line-height:4.6px;color:#000;-webkit-text-stroke:0.16px #000;white-space:nowrap;transform:rotate(-90deg) translateX(-100%);transform-origin:0 0">10 /hascode/</div>
<div style="left:399.0px;top:311.9208px;width:136.6px;height:25.379200000000026px;background:#c80000;border:0.6px solid #5a0000;border-bottom:none;box-sizing:border-box"></div>
<div class="t" style="left:457.0px;top:315.9208px;width:20px;text-align:center;font-size:4.4px;line-height:4px;color:#000;-webkit-text-stroke:0.12px #000;transform:rotate(-90deg)">176</div>
<div style="left:466.7px;top:337px;width:0.6px;height:3px;background:#404040"></div>
<div class="t" style="left:465.6px;top:348.6px;font-size:3.9px;line-height:4.6px;color:#000;-webkit-text-stroke:0.16px #000;white-space:nowrap;transform:rotate(-90deg) translateX(-100%);transform-origin:0 0">13 /hascode/j_sec...</div>
<div style="left:559.0px;top:263.3254px;width:136.6px;height:73.97460000000001px;background:#c80000;border:0.6px solid #5a0000;border-bottom:none;box-sizing:border-box"></div>
<div class="t" style="left:617.0px;top:267.3254px;width:20px;text-align:center;font-size:4.4px;line-height:4px;color:#000;-webkit-text-stroke:0.12px #000;transform:rotate(-90deg)">513</div>
<div style="left:626.7px;top:337px;width:0.6px;height:3px;background:#404040"></div>
<div class="t" style="left:625.6px;top:349.0px;font-size:4.1px;line-height:4.6px;color:#000;-webkit-text-stroke:0.16px #000;white-space:nowrap;transform:rotate(-90deg) translateX(-100%);transform-origin:0 0">15 /hascode/rest...</div>
<div style="left:226.9px;top:337.0px;width:480.80000000000007px;height:0.9px;background:#4a4a4a"></div>
<div style="left:439.2px;top:389.3px;width:2.2px;height:2.5px;background:#dd0000"></div>
<div class="t" style="left:444.2px;top:388.2px;font-size:5.1px;line-height:5.1px;font-weight:normal;color:#111;-webkit-text-stroke:0.1px #000">Average</div>
</body></html>
